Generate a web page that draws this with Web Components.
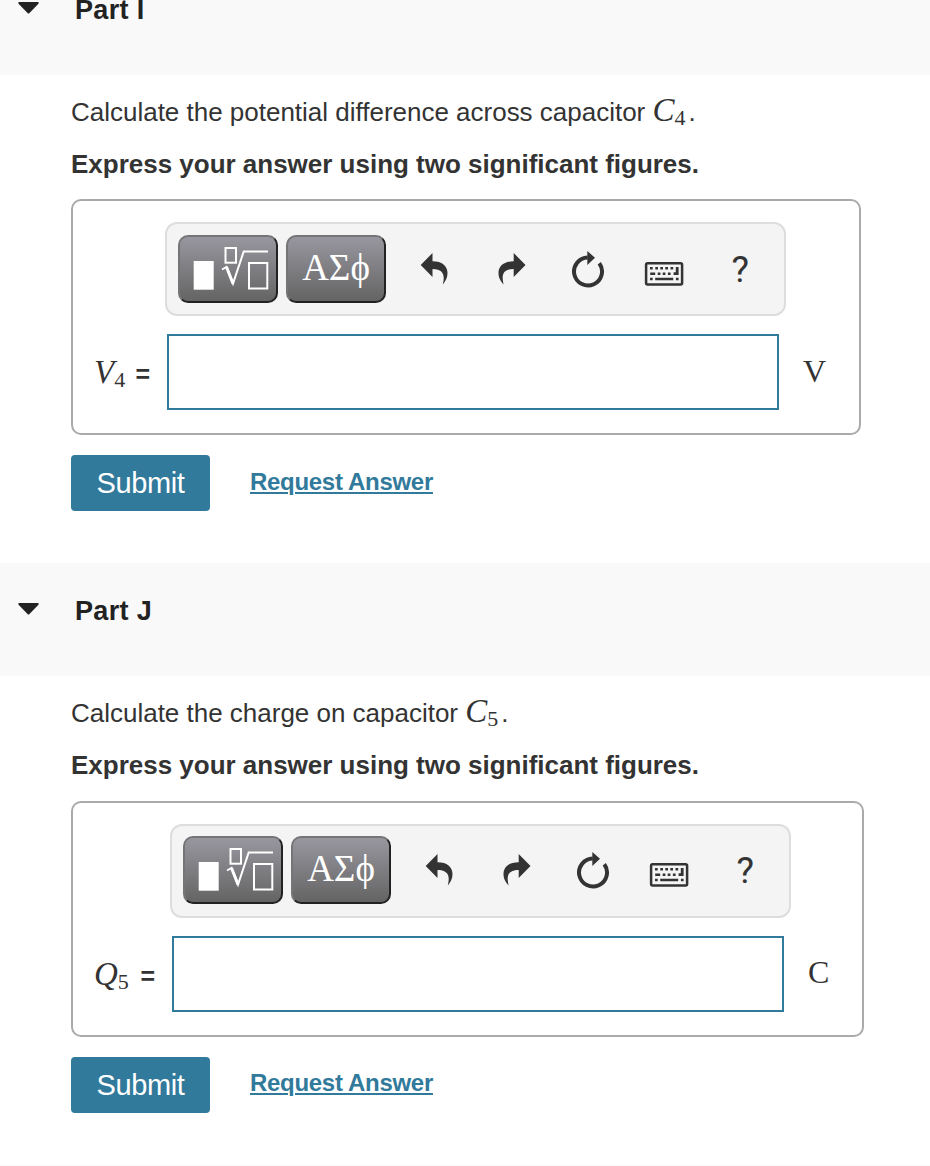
<!DOCTYPE html>
<html lang="en">
<head>
<meta charset="utf-8">
<title>Capacitors</title>
<style>
body{
    margin: 0;
    height: 1166px;
    overflow: hidden;
    background: #FFFFFF;
    color: #333333;
    font-family: "Liberation Sans", Arial, sans-serif;
}
main{
    margin-top: -38px;
}
footer{
    height: 1px;
    background: #F9F9F9;
}
</style>
</head>
<body>
<main>
    <part-section title="Part I">
        <question-text>
            <span>Calculate the potential difference across capacitor</span>
            <math-var name="C" sub="4"></math-var><span>.</span>
        </question-text>
        <answer-panel style="--label: 92px; --width: 790px">
            <math-var slot="label" name="V" sub="4"></math-var>
            <span slot="unit">V</span>
        </answer-panel>
        <answer-actions></answer-actions>
    </part-section>
    <part-section title="Part J" style="--nudge: 1px">
        <question-text>
            <span>Calculate the charge on capacitor</span>
            <math-var name="C" sub="5"></math-var><span>.</span>
        </question-text>
        <answer-panel style="--label: 97px; --width: 793px">
            <math-var slot="label" name="Q" sub="5"></math-var>
            <span slot="unit">C</span>
        </answer-panel>
        <answer-actions></answer-actions>
    </part-section>
    <footer></footer>
</main>

<script>
// small helper so every element gets an open root with its own markup
class BaseElement extends HTMLElement{
    constructor(){
        super();
        this.attachShadow({ mode: 'open' })
        const template = document.createElement('template');
        template.innerHTML = this.constructor.markup;
        this.shadowRoot.appendChild(template.content.cloneNode(true));
    }
}

class PartSection extends BaseElement{
    static markup = `
        <style>
        :host{
            display: block;
        }
        header{
            display: flex;
            align-items: center;
            box-sizing: border-box;
            height: 113px;
            padding: 0 0 18px 18px;
            background: #F9F9F9;
            color: #222222;
        }
        svg{
            width: 21px;
            height: 12px;
            margin-right: 36px;
            margin-top: -3px;
        }
        h2{
            margin: 0;
            font-size: 27px;
            line-height: 32px;
            font-weight: bold;
            letter-spacing: .35px;
        }
        .body{
            padding-left: 71px;
        }
        </style>
        <header>
            <svg viewBox="0 0 21 12"><path d="M1 0H20Q21.5 .6 20.2 2L11.5 11Q10.5 12 9.500 11L.8 2Q-.5 .6 1 0Z" fill="#222"/></svg>
            <h2></h2>
        </header>
        <div class="body"><slot></slot></div>
    `

    connectedCallback(){
        this.shadowRoot.querySelector('h2').textContent = this.getAttribute('title');
    }
}

class QuestionText extends BaseElement{
    static markup = `
        <style>
        :host{
            display: block;
            padding-top: 17px;
            font-size: 26px;
            white-space: nowrap;
        }
        p{
            margin: 0;
            height: 40px;
            line-height: 40px;
            letter-spacing: -.01px;
        }
        .hint{
            margin-top: 12px;
            font-weight: bold;
            font-size: 26px;
        }
        </style>
        <p><slot></slot></p>
        <p class="hint">Express your answer using two significant figures.</p>
    `
}

class MathVar extends BaseElement{
    static markup = `
        <style>
        :host{
            display: inline-flex;
            align-items: baseline;
            font-family: "Liberation Serif", "Times New Roman", serif;
            font-size: 33px;
            line-height: 1;
        }
        i{
            font-style: italic;
        }
        span{
            font-size: 22px;
            margin: 0 3px -4px 0;
            transform: translateY(4px);
        }
        </style>
        <i></i><span></span>
    `

    connectedCallback(){
        this.shadowRoot.querySelector('i').textContent = this.getAttribute('name');
        this.shadowRoot.querySelector('span').textContent = this.getAttribute('sub');
    }
}

class MathToolbar extends BaseElement{
    static markup = `
        <style>
        :host{
            display: flex;
            align-items: center;
            box-sizing: border-box;
            height: 94px;
            padding-left: 11px;
            padding-bottom: calc(var(--nudge, 0px) * 2);
            border: 2px solid #DDDDDD;
            border-radius: 12px;
            background: #F4F4F4;
        }
        .key{
            box-sizing: border-box;
            width: 100px;
            height: 68px;
            margin-right: 8px;
            padding: 0;
            border: 2px solid;
            border-color: #757577 #222222 #222222 #757577;
            border-radius: 10px;
            background: linear-gradient(#98979F, #646464);
            color: #FFFFFF;
            font-family: "Liberation Serif", serif;
            font-size: 37px;
            line-height: 58px;
            text-align: center;
        }
        .key svg{
            display: block;
        }
        .letters{
            padding-bottom: 3px;
        }
        .tool{
            display: flex;
            justify-content: center;
            align-items: center;
            width: 76.5px;
            height: 68px;
            color: #333333;
        }
        .first{
            margin-left: 2px;
        }
        .help{
            font-family: Roboto, sans-serif;
            font-size: 37px;
        }
        </style>
        <button class="key" aria-label="Templates">
            <svg width="96" height="64" viewBox="0 0 96 64" fill="none" stroke="#fff" stroke-width="2">
                <rect x="13.700" y="24" width="20" height="28.700" fill="#fff" stroke="none"/>
                <rect x="45.500" y="11" width="10.500" height="14.700"/>
                <path d="M42 32.500l4.500-2.500L53 46.500L63.700 14.500H88"/>
                <path d="M46.500 30L53 46.500" stroke-width="3"/>
                <rect x="69" y="26" width="18.300" height="25.500"/>
            </svg>
        </button>
        <button class="key letters">ΑΣϕ</button>
        <div class="tool first">
            <svg width="40" height="40" viewBox="0 0 40 40" fill="currentColor">
                <path d="M6.700 16L18.500 4V12.300C28 12.300 33.500 17 33.500 24C33.500 29 31.500 32 28.800 35.500C31 27 30 20 18.500 20V28Z"/>
            </svg>
        </div>
        <div class="tool">
            <svg width="40" height="40" viewBox="0 0 40 40" fill="currentColor">
                <path d="M34.500 16L22.700 4V12.300C13 12.300 7.500 17 7.500 24C7.500 29 9.700 32 12.600 35.500C10.500 27 11.200 20 22.700 20V28Z"/>
            </svg>
        </div>
        <div class="tool">
            <svg width="40" height="40" viewBox="0 0 40 40">
                <path d="M32.300 14.200A14 14 0 1 1 20.700 8.500" fill="none" stroke="currentColor" stroke-width="4"/>
                <path d="M20.300 2L28 8.700L20.300 16Z" fill="currentColor"/>
            </svg>
        </div>
        <div class="tool">
            <svg width="40" height="40" viewBox="0 0 40 40">
                <rect x="2.100" y="14.200" width="36" height="21.400" rx="1.500" fill="none" stroke="currentColor" stroke-width="2.500"/>
                <path fill="currentColor" d="M6 18h2.700v2.600h-2.700zM11.300 18h2.700v2.600h-2.700zM16.300 18h2.700v2.600h-2.700zM21.300 18h2.700v2.600h-2.700zM26.500 18h2.700v2.600h-2.700z
                    M31.800 18h2.800v8h-5v-2.700h2.200z
                    M6.200 23.400h5v2.600h-5zM13.700 23.400h2.700v2.600h-2.700zM18.700 23.400h2.700v2.600h-2.700zM23.900 23.400h2.700v2.600h-2.700z
                    M6 28.700h2.700v2.600h-2.700zM11.200 28.700h18v2.600h-18zM31.900 28.700h2.700v2.600h-2.700z"/>
            </svg>
        </div>
        <div class="tool help">?</div>
    `
}

class AnswerPanel extends BaseElement{
    static markup = `
        <style>
        :host{
            display: grid;
            grid-template-columns: var(--label) 621px 1fr;
            grid-template-rows: 94px 76px;
            row-gap: 18px;
            box-sizing: border-box;
            width: var(--width);
            height: 236px;
            margin-top: calc(15px + var(--nudge, 0px));
            padding-top: 21px;
            border: 2px solid #AAAAAA;
            border-radius: 10px;
        }
        math-toolbar{
            grid-column: 2;
        }
        .label{
            grid-column: 1;
            display: flex;
            align-items: baseline;
            justify-content: space-between;
            padding: 22px 15px 0 21px;
            font-size: 26px;
        }
        .equals{
            font-size: 25px;
            font-weight: bold;
        }
        input{
            box-sizing: border-box;
            width: 612px;
            height: 76px;
            margin: 0 0 0 2px;
            padding: 0 10px;
            border: 2px solid #317A9B;
            border-radius: 0;
            background: #FFFFFF;
            font-size: 26px;
        }
        .unit{
            padding: calc(19px - var(--nudge, 0px)) 0 0 17px;
            font-family: "Liberation Serif", serif;
            font-size: 32px;
            line-height: 36px;
        }
        </style>
        <math-toolbar></math-toolbar>
        <div class="label"><slot name="label"></slot><span class="equals">=</span></div>
        <input type="text">
        <div class="unit"><slot name="unit"></slot></div>
    `
}

class AnswerActions extends BaseElement{
    static markup = `
        <style>
        :host{
            display: flex;
            height: 56px;
            padding: 20px 0 52px;
        }
        button{
            width: 139px;
            height: 56px;
            padding: 0;
            border: 0;
            border-radius: 4px;
            background: #317A9B;
            color: #FFFFFF;
            font-family: inherit;
            font-size: 29px;
            letter-spacing: -.4px;
        }
        a{
            margin-left: 40px;
            margin-top: calc(0px - var(--nudge, 0px));
            color: #317A9B;
            font-size: 24px;
            font-weight: bold;
            line-height: 54px;
            letter-spacing: -.3px;
            text-decoration: underline;
            text-decoration-thickness: 2px;
            text-underline-offset: 2px;
        }
        </style>
        <button>Submit</button>
        <a href="#">Request Answer</a>
    `
}

window.customElements.define('part-section', PartSection)
window.customElements.define('question-text', QuestionText)
window.customElements.define('math-var', MathVar)
window.customElements.define('math-toolbar', MathToolbar)
window.customElements.define('answer-panel', AnswerPanel)
window.customElements.define('answer-actions', AnswerActions)
</script>
</body>
</html>
